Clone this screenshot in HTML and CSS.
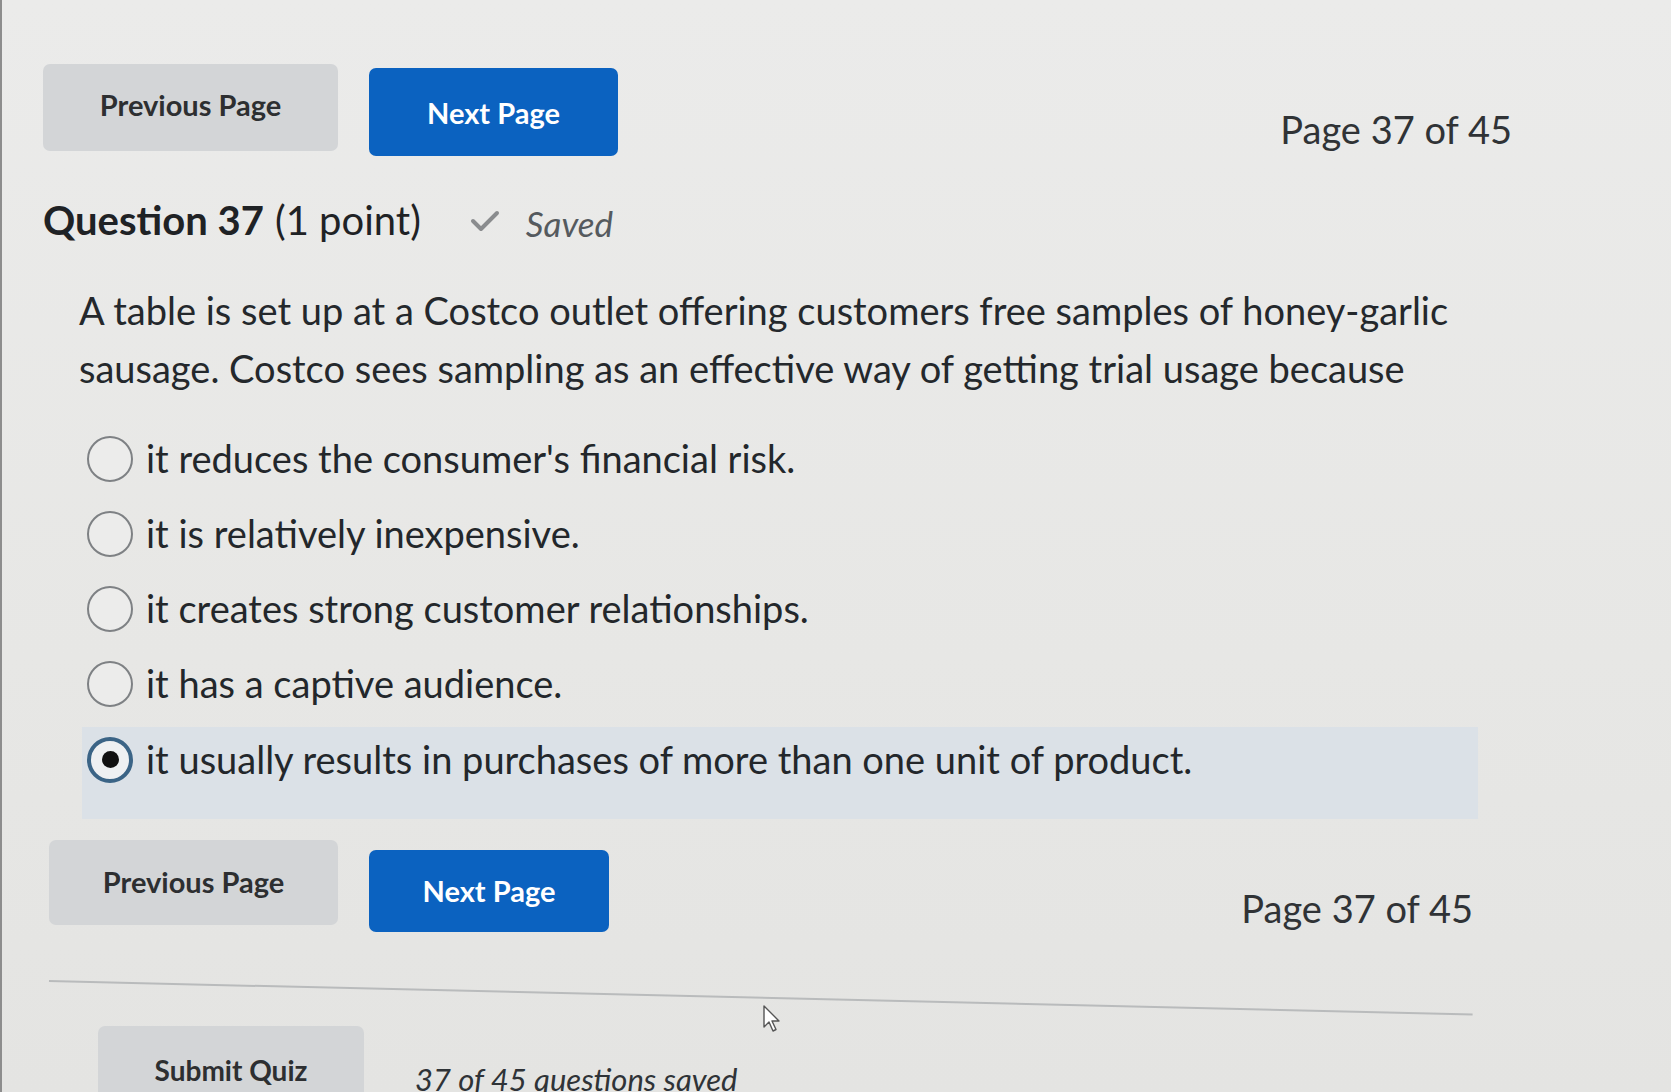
FILE: index.html
```html
<!DOCTYPE html>
<html lang="en">
<head>
  <meta charset="UTF-8" />
  <title>Quiz - Question 37</title>
  <link rel="stylesheet" href="styles.css">
</head>
<body>

  <main class="quiz">
    <div class="pager">
      <button class="btn btn-prev">Previous Page</button>
      <button class="btn btn-next">Next Page</button>
      <span class="page-count">Page 37 of 45</span>
    </div>

    <h2 class="question-title">
      <strong>Question 37</strong> (1 point)
      <span class="saved">
        <svg class="check" viewBox="0 0 30 24" width="30" height="24"><path d="M3 12 L11 20 L27 4" fill="none" stroke="#8a8c8e" stroke-width="4" stroke-linecap="round" stroke-linejoin="round"/></svg>
        <em>Saved</em>
      </span>
    </h2>

    <p class="question-text">A table is set up at a Costco outlet offering customers free samples of honey-garlic sausage. Costco sees sampling as an effective way of getting trial usage because</p>

    <div class="options">
      <label class="option"><span class="radio"></span>it reduces the consumer's financial risk.</label>
      <label class="option"><span class="radio"></span>it is relatively inexpensive.</label>
      <label class="option"><span class="radio"></span>it creates strong customer relationships.</label>
      <label class="option"><span class="radio"></span>it has a captive audience.</label>
      <label class="option selected"><span class="radio checked"></span>it usually results in purchases of more than one unit of product.</label>
    </div>

    <div class="pager pager-bottom">
      <button class="btn btn-prev">Previous Page</button>
      <button class="btn btn-next">Next Page</button>
      <span class="page-count">Page 37 of 45</span>
    </div>

    <hr class="divider">

    <div class="submit-row">
      <button class="btn btn-submit">Submit Quiz</button>
      <em class="saved-count">37 of 45 questions saved</em>
    </div>
  </main>

  <svg class="cursor" viewBox="0 0 20 30" width="20" height="30"><path d="M2 2 L2 23 L7 18 L11 27 L14 25.5 L10 17 L17 17 Z" fill="#fff" stroke="#555" stroke-width="1.4" stroke-linejoin="round"/></svg>

</body>
</html>
```

FILE: styles.css
```css
* {
  box-sizing: border-box;
}

body {
  margin: 0;
  height: 1092px;
  overflow: hidden;
  position: relative;
  font-family: Lato, 'Open Sans', sans-serif;
  background: linear-gradient(180deg, #ebebea 0%, #e7e7e5 60%, #e4e4e2 100%);
  color: #2b2f33;
  border-left: 2px solid #8d8d8d;
}

.quiz {
  padding: 64px 0 0 41px;
  width: 1510px;
}

.pager {
  display: flex;
  align-items: flex-start;
}

.btn {
  font-family: Lato, sans-serif;
  font-weight: 700;
  font-size: 29px;
  border: none;
  border-radius: 7px;
  cursor: pointer;
}

.btn-prev {
  width: 295px;
  height: 87px;
  background-color: #d3d5d7;
  color: #2d2f31;
  padding-bottom: 8px;
}

.btn-next {
  width: 249px;
  height: 88px;
  margin-left: 31px;
  margin-top: 4px;
  background-color: #0b62c0;
  color: #fff;
  padding-bottom: 0;
}

.page-count {
  margin-left: auto;
  margin-top: 42px;
  font-size: 38px;
  line-height: 46px;
  color: #303336;
}

.question-title {
  margin: 40px 0 0;
  font-size: 40px;
  line-height: 48px;
  font-weight: 400;
  color: #1f2225;
  display: flex;
  align-items: baseline;
  gap: 11px;
}

.question-title strong {
  font-weight: 700;
}

.saved {
  margin-left: 38px;
  display: inline-flex;
  align-items: center;
  gap: 26px;
  color: #555a5e;
  font-size: 35px;
}

.check {
  position: relative;
  top: -2px;
}

.question-text {
  margin: 34px 0 0 36px;
  width: 1420px;
  font-size: 38px;
  line-height: 58px;
  color: #24282c;
}

.options {
  margin-top: 24px;
  display: flex;
  flex-direction: column;
}

.option {
  display: flex;
  align-items: center;
  gap: 13px;
  margin-left: 39px;
  width: 1396px;
  padding: 14px 5px;
  font-size: 38px;
  line-height: 47px;
  color: #23272b;
}

.option.selected {
  background-color: #dbe1e7;
  margin-top: 6px;
  padding-top: 9px;
  padding-bottom: 36px;
}

.radio {
  flex: none;
  width: 46px;
  height: 46px;
  border-radius: 50%;
  border: 2px solid #7e8184;
  background-color: #ececeb;
  display: flex;
  align-items: center;
  justify-content: center;
}

.radio.checked {
  border: 4px solid #3b6486;
  background-color: #eef0f2;
}

.radio.checked::after {
  content: "";
  width: 17px;
  height: 17px;
  border-radius: 50%;
  background-color: #111;
}

.pager-bottom {
  margin-top: 21px;
  width: 1430px;
  padding-left: 6px;
}

.pager-bottom .btn-prev {
  width: 289px;
  height: 85px;
  padding-bottom: 4px;
}

.pager-bottom .btn-next {
  width: 240px;
  height: 82px;
  margin-top: 10px;
  padding-bottom: 2px;
}

.pager-bottom .page-count {
  margin-top: 45px;
}

.divider {
  margin: 48px 0 0 6px;
  width: 1424px;
  border: none;
  border-top: 2px solid #b9bbbc;
  transform: rotate(1.35deg);
  transform-origin: left center;
}

.submit-row {
  margin-top: 44px;
  padding-left: 55px;
  display: flex;
  align-items: flex-start;
}

.btn-submit {
  width: 266px;
  height: 90px;
  background-color: #d3d5d7;
  color: #2d2f31;
  font-size: 28px;
  padding-bottom: 4px;
}

.saved-count {
  margin: 34px 0 0 51px;
  font-size: 31px;
  color: #2f3337;
}

.cursor {
  position: absolute;
  left: 760px;
  top: 1004px;
}
```
